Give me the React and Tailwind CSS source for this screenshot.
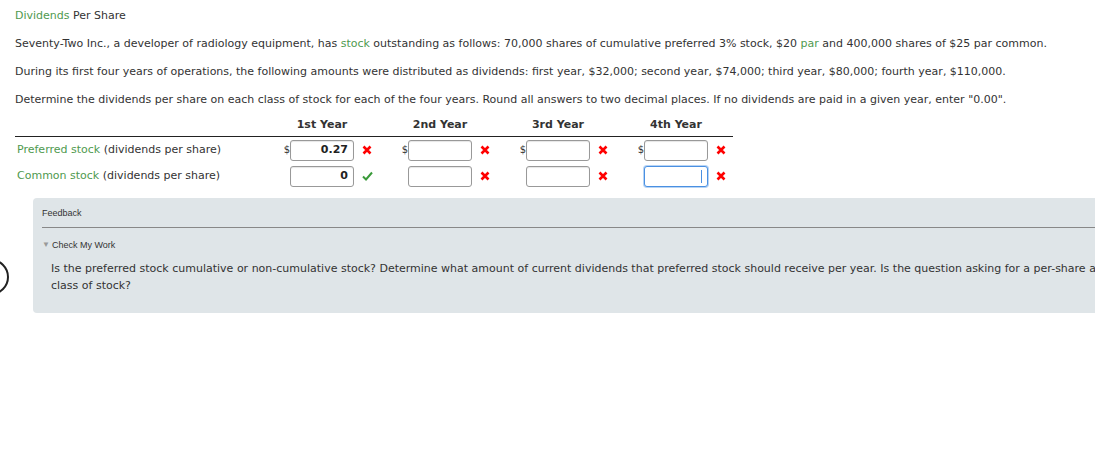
const green = 'text-[#4f9a4f]'

const XMark = () => (
  <svg width="10" height="10" viewBox="0 0 10 10" className="block">
    <path d="M1.5 1.5 L8.5 8.5 M8.5 1.5 L1.5 8.5" stroke="#f00" strokeWidth="2.6" strokeLinecap="butt" />
  </svg>
)

const Check = () => (
  <svg width="11" height="10" viewBox="0 0 11 10" className="block">
    <path d="M1 5.5 L4 8.5 L10 1.5" stroke="#3a9a3a" strokeWidth="2" fill="none" />
  </svg>
)

const Cell = ({ dollar, value, mark, focus }) => (
  <div className="flex items-center w-[118px] shrink-0">
    <span className="w-[10px] text-[10px] text-[#333] text-right leading-none">{dollar ? '$' : ''}</span>
    <div
      className={
        'w-[64px] h-[21px] rounded-[3px] bg-white flex items-center justify-end pr-[5px] text-[11px] font-bold text-[#222] ' +
        (focus
          ? 'border border-[#4a90e2] shadow-[0_0_0_1px_#b7d4f5]'
          : 'border border-[#999] shadow-[inset_0_1px_1px_rgba(0,0,0,0.1)]')
      }
    >
      {focus ? <span className="w-[1px] h-[13px] bg-[#4a90e2]" /> : value}
    </div>
    <span className="ml-[8px]">{mark === 'ok' ? <Check /> : <XMark />}</span>
  </div>
)

export default function App() {
  const years = ['1st Year', '2nd Year', '3rd Year', '4th Year']
  return (
    <div
      className="w-[1095px] h-[462px] overflow-hidden bg-white text-[#333] relative"
      style={{ fontFamily: 'Verdana, "DejaVu Sans", sans-serif' }}
    >
      <div className="pl-[15px] pt-[9px] text-[11px] leading-[14px]">
        <p>
          <span className={green}>Dividends</span> Per Share
        </p>
        <p className="mt-[14px]">
          Seventy-Two Inc., a developer of radiology equipment, has <span className={green}>stock</span> outstanding as
          follows: 70,000 shares of cumulative preferred 3% stock, $20 <span className={green}>par</span> and 400,000
          shares of $25 par common.
        </p>
        <p className="mt-[14px]">
          During its first four years of operations, the following amounts were distributed as dividends: first year,
          $32,000; second year, $74,000; third year, $80,000; fourth year, $110,000.
        </p>
        <p className="mt-[14px]">
          Determine the dividends per share on each class of stock for each of the four years. Round all answers to two
          decimal places. If no dividends are paid in a given year, enter "0.00".
        </p>

        <div className="mt-[11px] w-[718px]">
          <div className="flex border-b border-[#222] pb-[4px]">
            <div className="w-[265px] shrink-0" />
            {years.map((y) => (
              <div key={y} className="w-[118px] shrink-0">
                <div className="ml-[10px] w-[64px] text-center font-bold text-[11px] whitespace-nowrap">{y}</div>
              </div>
            ))}
          </div>
          <div className="flex items-center h-[26px]">
            <div className="w-[265px] shrink-0 pl-[2px]">
              <span className={green}>Preferred stock</span> (dividends per share)
            </div>
            <Cell dollar value="0.27" mark="x" />
            <Cell dollar />
            <Cell dollar />
            <Cell dollar />
          </div>
          <div className="flex items-center h-[26px]">
            <div className="w-[265px] shrink-0 pl-[2px]">
              <span className={green}>Common stock</span> (dividends per share)
            </div>
            <Cell value="0" mark="ok" />
            <Cell />
            <Cell />
            <Cell focus />
          </div>
        </div>
      </div>

      <div className="ml-[33px] mt-[9px] w-[1200px] h-[115px] bg-[#dfe5e8] rounded-[4px] pl-[9px] pt-[9px]">
        <div
          className="text-[9px] text-[#333] pb-[6px] border-b border-[#888]"
          style={{ fontFamily: 'Arial, "Liberation Sans", sans-serif' }}
        >
          Feedback
        </div>
        <div
          className="mt-[11px] text-[9px] text-[#333] flex items-center"
          style={{ fontFamily: 'Arial, "Liberation Sans", sans-serif' }}
        >
          <span className="text-[8px] text-[#999] mr-[2px]">▼</span>Check My Work
        </div>
        <p className="mt-[8px] ml-[9px] text-[11px] leading-[17px] text-[#333]">
          <span className="whitespace-nowrap">
            Is the preferred stock cumulative or non-cumulative stock? Determine what amount of current dividends that
            preferred stock should receive per year. Is the question asking for a per-share amount or a total amount for
            each
          </span>
          <br />
          class of stock?
        </p>
      </div>

      <div className="absolute left-[-27px] top-[259px] w-[36px] h-[36px] rounded-full border-[2.5px] border-[#222]" />
    </div>
  )
}
